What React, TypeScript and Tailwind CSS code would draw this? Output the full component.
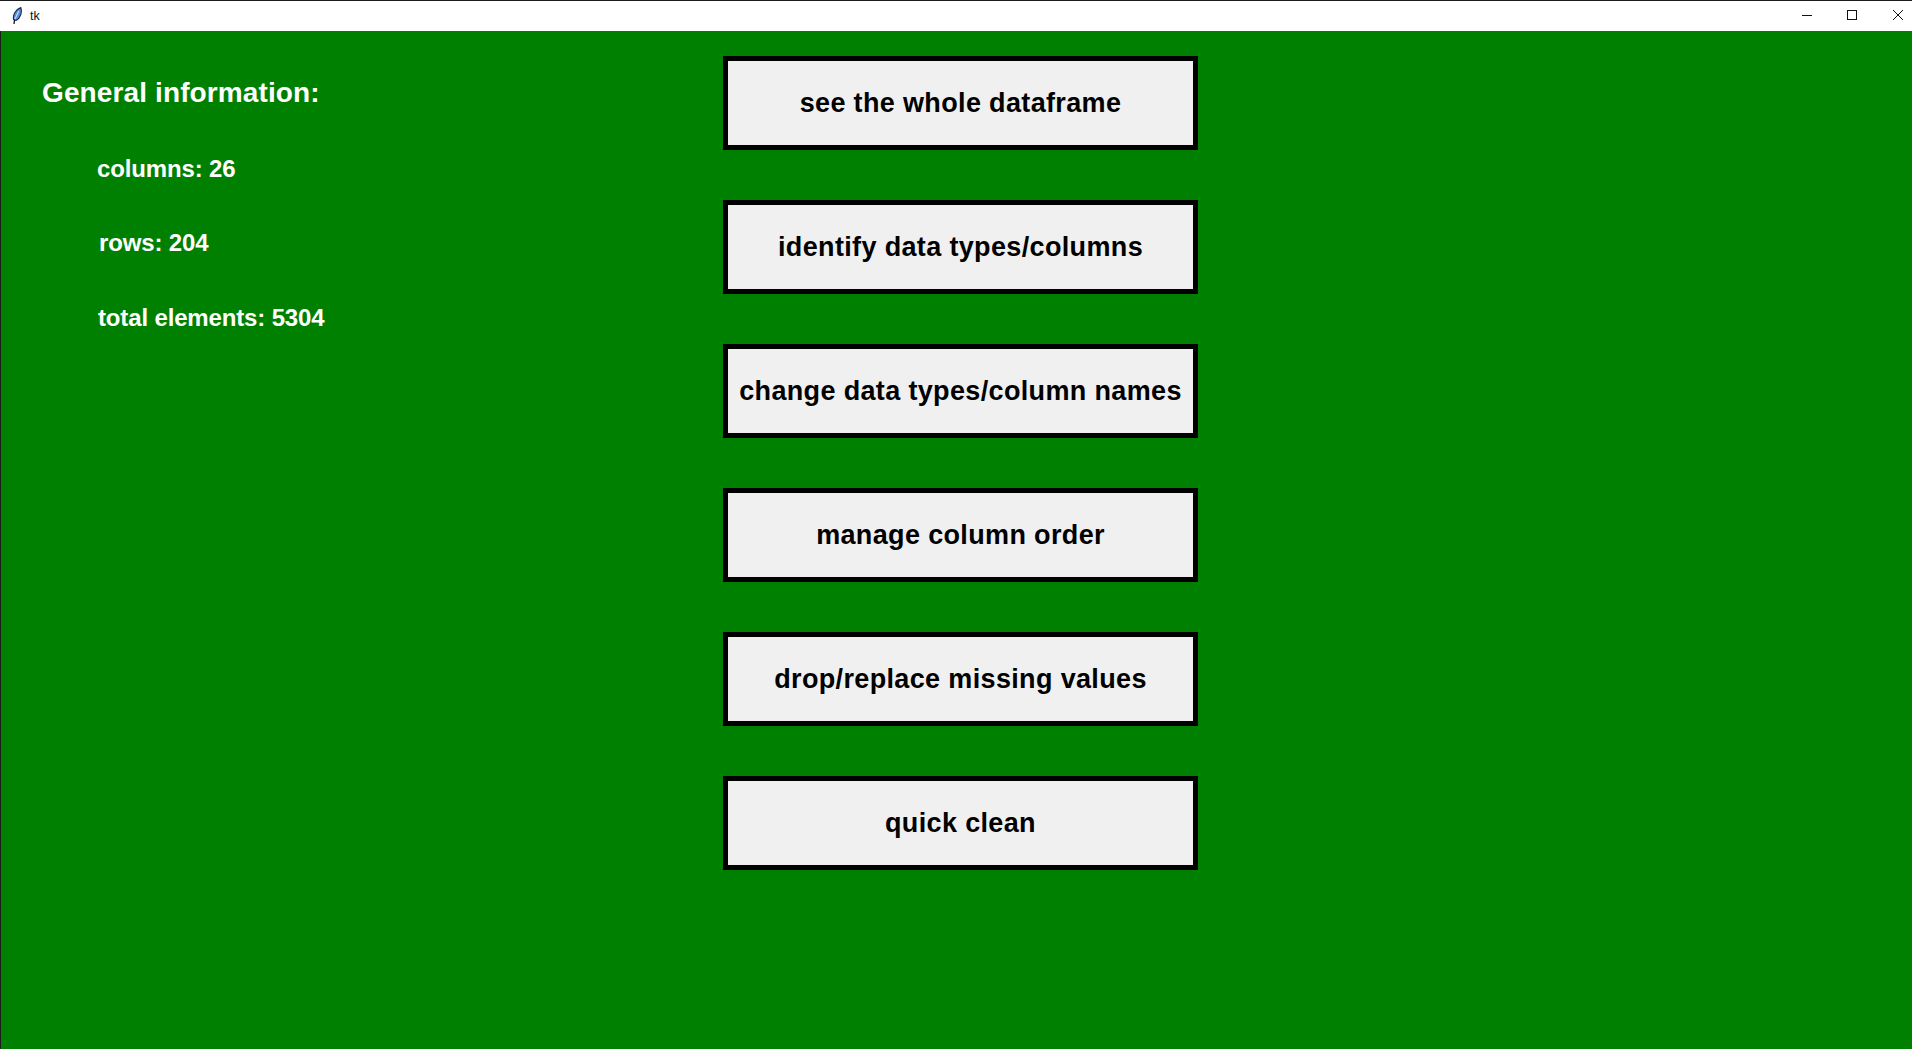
const actions = [
	'see the whole dataframe',
	'identify data types/columns',
	'change data types/column names',
	'manage column order',
	'drop/replace missing values',
	'quick clean',
];

function TitleBar() {
	return (
		<div className="flex h-[31px] shrink-0 items-center justify-between border-t border-t-[#1c1c1c] bg-white">
			<div className="flex items-center">
				<svg width="14" height="18" viewBox="0 0 14 18" className="ml-[11px]">
					<path d="M3 17 L3.8 11" stroke="#111" strokeWidth="1.3" fill="none" />
					<path d="M2.6 12.5 C1.6 8 4.6 2.2 9.8 0.6 C11.2 5 9.8 11 5 13.4 Z" fill="#5b8fe0" stroke="#1c2a44" strokeWidth="1.1" />
					<path d="M4 12 L7.8 4" stroke="#dbe8fb" strokeWidth="1" fill="none" />
				</svg>
				<span className="ml-[5px] font-['Liberation_Sans',sans-serif] text-[12.5px] text-[#101010]">tk</span>
			</div>
			<div className="flex items-center">
				<svg width="132" height="16" viewBox="0 0 132 16" fill="none" stroke="#111" strokeWidth="1">
					<path d="M22 7.5 H32" />
					<rect x="67.5" y="2.5" width="9" height="9" />
					<path d="M113 2 L123 12 M123 2 L113 12" />
				</svg>
			</div>
		</div>
	);
}

function GeneralInfo() {
	return (
		<div className="w-[723px] shrink-0 pt-[31px] font-['Liberation_Sans',sans-serif] font-bold text-white">
			<h1 className="ml-[41px] text-[28px] leading-[62px] tracking-[0.12px]">General information:</h1>
			<p className="ml-[96px] mt-[29px] text-[24px] leading-[32px] tracking-[-0.15px]">columns: 26</p>
			<p className="ml-[98px] mt-[42px] text-[24px] leading-[32px] tracking-[-0.15px]">rows: 204</p>
			<p className="ml-[97px] mt-[43px] text-[24px] leading-[32px] tracking-[-0.15px]">total elements: 5304</p>
		</div>
	);
}

export default function App() {
	return (
		<div className="flex h-[1049px] w-[1912px] flex-col overflow-hidden bg-white">
			<TitleBar />
			<div className="flex flex-1 border-l border-l-[#1c1c1c] bg-[#008000]">
				<GeneralInfo />
				<div className="-ml-px flex flex-col gap-[50px] pt-[25px]">
					{actions.map((a) => (
						<button
							key={a}
							className="flex h-[94px] w-[475px] items-center justify-center border-[5px] border-black bg-[#f0f0f0] font-['Liberation_Sans',sans-serif] text-[27px] font-bold tracking-[0.35px] text-black"
						>
							{a}
						</button>
					))}
				</div>
			</div>
		</div>
	);
}
